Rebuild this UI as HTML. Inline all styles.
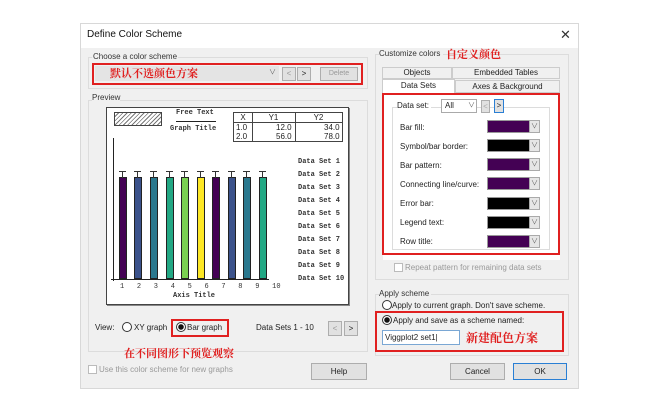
<!DOCTYPE html><html><head><meta charset="utf-8"><style>
*{margin:0;padding:0;box-sizing:border-box}
body{width:650px;height:401px;background:#fff;position:relative;overflow:hidden;font-family:"Liberation Sans","Noto Sans CJK SC",sans-serif;font-size:8px;color:#222}
.a{position:absolute;white-space:nowrap}
.red{border:2px solid #e02020}
.rt{color:#e02020;font-family:"Noto Serif CJK SC","Noto Sans CJK SC",serif;font-weight:bold}
.grp{position:absolute;border:1px solid #dcdcdc}
.btn{position:absolute;background:#e1e1e1;border:1px solid #adadad;text-align:center}
.sw{position:absolute;width:44px;height:13px;border:1px solid #999}
.dd{position:absolute;width:11px;height:13px;background:#e6e6e6;border:1px solid #aaa;font-size:7px;text-align:center;line-height:11px;color:#666}
.m{font-family:"Liberation Mono",monospace;font-size:7px;font-weight:bold;color:#333}
.bar{position:absolute;width:8px;border:1px solid #222;top:177px;height:102px}
.eb{position:absolute;width:7px;height:6px;border-top:1px solid #333;top:171px}
.eb:after{content:"";position:absolute;left:3px;top:0;width:1px;height:6px;background:#333}
</style></head><body>
<div class="a" style="left:80px;top:23px;width:499px;height:366px;background:#f0f0f0;border:1px solid #d8d8d8"></div>
<div class="a" style="left:81px;top:24px;width:497px;height:24px;background:#fff"></div>
<div class="a" style="left:87px;top:29px;font-size:10px;color:#111">Define Color Scheme</div>
<div class="a" style="left:560px;top:27px;font-size:13px;color:#333">✕</div>

<div class="grp" style="left:88px;top:57px;width:280px;height:32px"></div>
<div class="a" style="left:92px;top:52px;background:#f0f0f0;padding:0 1px;color:#333">Choose a color scheme</div>
<div class="a red" style="left:92px;top:63px;width:271px;height:22px"></div>
<div class="a" style="left:95px;top:66px;width:184px;height:15px;background:#e4e4e4"></div>
<div class="a rt" style="left:110px;top:65px;font-size:11px">默认不选颜色方案</div>
<div class="a" style="left:269px;top:67px;font-size:7px;color:#666">∨</div>
<div class="btn" style="left:282px;top:67px;width:14px;height:14px;color:#999;line-height:12px">&lt;</div>
<div class="btn" style="left:297px;top:67px;width:14px;height:14px;line-height:12px">&gt;</div>
<div class="btn" style="left:320px;top:67px;width:38px;height:14px;color:#999;line-height:12px;font-size:7px">Delete</div>

<div class="grp" style="left:88px;top:100px;width:280px;height:252px"></div>
<div class="a" style="left:92px;top:93px;background:#f0f0f0;color:#333">Preview</div>
<div class="a" style="left:106px;top:107px;width:243px;height:198px;background:#fff;border:1px solid #444;box-shadow:1px 1px 0 #888"></div>
<div class="a" style="left:114px;top:112px;width:48px;height:14px;border:1px solid #444;background:repeating-linear-gradient(135deg,#fff 0 2px,#777 2px 3px)"></div>
<div class="a m" style="left:176px;top:109px">Free Text</div>
<div class="a" style="left:176px;top:121px;width:40px;height:1px;background:#222"></div>
<div class="a m" style="left:170px;top:125px">Graph Title</div>
<div class="a" style="left:233px;top:112px;width:110px;height:30px;border:1px solid #444;font-size:8px">
<div class="a" style="left:0;top:0;width:18px;text-align:center">X</div><div class="a" style="left:18px;top:0;width:43px;text-align:center">Y1</div><div class="a" style="left:61px;top:0;width:47px;text-align:center">Y2</div>
<div class="a" style="left:18px;top:0;width:1px;height:28px;background:#444"></div><div class="a" style="left:61px;top:0;width:1px;height:28px;background:#444"></div>
<div class="a" style="left:0;top:9px;width:108px;height:1px;background:#444"></div>
<div class="a" style="left:2px;top:10px">1.0</div><div class="a" style="left:42px;top:10px">12.0</div><div class="a" style="left:90px;top:10px">34.0</div>
<div class="a" style="left:2px;top:19px">2.0</div><div class="a" style="left:42px;top:19px">56.0</div><div class="a" style="left:90px;top:19px">78.0</div>
</div>
<div class="a" style="left:113px;top:138px;width:1px;height:143px;background:#222"></div>
<div class="a" style="left:111px;top:279px;width:158px;height:1px;background:#222"></div>
<div class="bar" style="left:119px;background:#440154"></div><div class="eb" style="left:119px"></div>
<div class="bar" style="left:134px;background:#3b528b"></div><div class="eb" style="left:134px"></div>
<div class="bar" style="left:150px;background:#2a788e"></div><div class="eb" style="left:150px"></div>
<div class="bar" style="left:166px;background:#22a884"></div><div class="eb" style="left:166px"></div>
<div class="bar" style="left:181px;background:#7ad151"></div><div class="eb" style="left:181px"></div>
<div class="bar" style="left:197px;background:#fde725"></div><div class="eb" style="left:197px"></div>
<div class="bar" style="left:212px;background:#440154"></div><div class="eb" style="left:212px"></div>
<div class="bar" style="left:228px;background:#3b528b"></div><div class="eb" style="left:228px"></div>
<div class="bar" style="left:243px;background:#2a788e"></div><div class="eb" style="left:243px"></div>
<div class="bar" style="left:259px;background:#22a884"></div><div class="eb" style="left:259px"></div>
<div class="a m" style="left:120px;top:283px;font-weight:normal;word-spacing:8.5px">1 2 3 4 5 6 7 8 9 10</div>
<div class="a m" style="left:173px;top:292px">Axis Title</div>
<div class="a m" style="left:298px;top:156px;line-height:13px;white-space:pre">Data Set 1
Data Set 2
Data Set 3
Data Set 4
Data Set 5
Data Set 6
Data Set 7
Data Set 8
Data Set 9
Data Set 10</div>

<div class="a" style="left:95px;top:323px">View:</div>
<div class="a" style="left:122px;top:322px;width:10px;height:10px;border-radius:50%;border:1px solid #333;background:#fff"></div>
<div class="a" style="left:134px;top:323px">XY graph</div>
<div class="a red" style="left:171px;top:319px;width:58px;height:18px"></div>
<div class="a" style="left:176px;top:322px;width:10px;height:10px;border-radius:50%;border:1px solid #333;background:radial-gradient(#111 0 2.5px,#fff 3px)"></div>
<div class="a" style="left:187px;top:323px">Bar graph</div>
<div class="a" style="left:256px;top:323px">Data Sets 1 - 10</div>
<div class="btn" style="left:328px;top:321px;width:14px;height:15px;color:#999;line-height:13px">&lt;</div>
<div class="btn" style="left:344px;top:321px;width:14px;height:15px;line-height:13px">&gt;</div>
<div class="a rt" style="left:124px;top:345px;font-size:11px">在不同图形下预览观察</div>
<div class="a" style="left:88px;top:365px;width:9px;height:9px;border:1px solid #bbb;background:#fff"></div>
<div class="a" style="left:99px;top:365px;color:#999">Use this color scheme for new graphs</div>
<div class="btn" style="left:311px;top:363px;width:56px;height:17px;line-height:15px">Help</div>

<div class="grp" style="left:375px;top:54px;width:194px;height:226px"></div>
<div class="a" style="left:379px;top:49px;background:#f0f0f0;padding-right:3px;color:#333">Customize colors</div>
<div class="a rt" style="left:446px;top:46px;font-size:11px">自定义颜色</div>
<div class="a" style="left:382px;top:67px;width:70px;height:12px;border:1px solid #ccc;text-align:center;line-height:10px">Objects</div>
<div class="a" style="left:452px;top:67px;width:108px;height:12px;border:1px solid #ccc;text-align:center;line-height:10px">Embedded Tables</div>
<div class="a" style="left:382px;top:79px;width:73px;height:14px;background:#fff;border:1px solid #ccc;border-bottom:none;text-align:center;line-height:12px">Data Sets</div>
<div class="a" style="left:455px;top:80px;width:105px;height:13px;border:1px solid #ccc;text-align:center;line-height:12px">Axes &amp; Background</div>
<div class="a" style="left:383px;top:93px;width:177px;height:167px;background:#fff"></div>
<div class="a red" style="left:382px;top:93px;width:178px;height:162px"></div>
<div class="grp" style="left:392px;top:107px;width:158px;height:143px"></div>
<div class="a" style="left:397px;top:101px;background:#fff;padding-right:2px">Data set:</div>
<div class="a" style="left:441px;top:99px;width:36px;height:14px;border:1px solid #aaa;background:#fff;padding-left:3px;line-height:12px">All<span style="position:absolute;left:26px;font-size:7px;color:#666">∨</span></div>
<div class="btn" style="left:481px;top:100px;width:9px;height:13px;color:#aaa;line-height:11px">&lt;</div>
<div class="btn" style="left:494px;top:99px;width:10px;height:14px;border:1px solid #2a7fd4;line-height:12px">&gt;</div>
<div class="a" style="left:400px;top:117.5px;line-height:19px;white-space:pre">Bar fill:
Symbol/bar border:
Bar pattern:
Connecting line/curve:
Error bar:
Legend text:
Row title:</div>
<div class="sw" style="left:487px;top:120px;background:#440154"></div><div class="dd" style="left:529px;top:120px">∨</div>
<div class="sw" style="left:487px;top:139px;background:#000"></div><div class="dd" style="left:529px;top:139px">∨</div>
<div class="sw" style="left:487px;top:158px;background:#440154"></div><div class="dd" style="left:529px;top:158px">∨</div>
<div class="sw" style="left:487px;top:177px;background:#440154"></div><div class="dd" style="left:529px;top:177px">∨</div>
<div class="sw" style="left:487px;top:197px;background:#000"></div><div class="dd" style="left:529px;top:197px">∨</div>
<div class="sw" style="left:487px;top:216px;background:#000"></div><div class="dd" style="left:529px;top:216px">∨</div>
<div class="sw" style="left:487px;top:235px;background:#440154"></div><div class="dd" style="left:529px;top:235px">∨</div>
<div class="a" style="left:394px;top:263px;width:9px;height:9px;border:1px solid #bbb;background:#fff"></div>
<div class="a" style="left:405px;top:263px;color:#999">Repeat pattern for remaining data sets</div>

<div class="grp" style="left:375px;top:294px;width:194px;height:62px"></div>
<div class="a" style="left:379px;top:289px;background:#f0f0f0;padding-right:2px;color:#333">Apply scheme</div>
<div class="a" style="left:382px;top:300px;width:10px;height:10px;border-radius:50%;border:1px solid #333;background:#fff"></div>
<div class="a" style="left:392px;top:301px">Apply to current graph. Don't save scheme.</div>
<div class="a red" style="left:375px;top:311px;width:189px;height:41px"></div>
<div class="a" style="left:382px;top:315px;width:10px;height:10px;border-radius:50%;border:1px solid #333;background:radial-gradient(#111 0 2.5px,#fff 3px)"></div>
<div class="a" style="left:393px;top:316px">Apply and save as a scheme named:</div>
<div class="a" style="left:382px;top:330px;width:78px;height:15px;border:1px solid #7aa7d4;background:#fff;padding-left:2px;line-height:13px">Viggplot2 set1|</div>
<div class="a rt" style="left:466px;top:329px;font-size:12px">新建配色方案</div>
<div class="btn" style="left:450px;top:363px;width:55px;height:17px;line-height:15px">Cancel</div>
<div class="btn" style="left:513px;top:363px;width:54px;height:17px;line-height:15px;border:1px solid #2a7fd4">OK</div>
</body></html>
